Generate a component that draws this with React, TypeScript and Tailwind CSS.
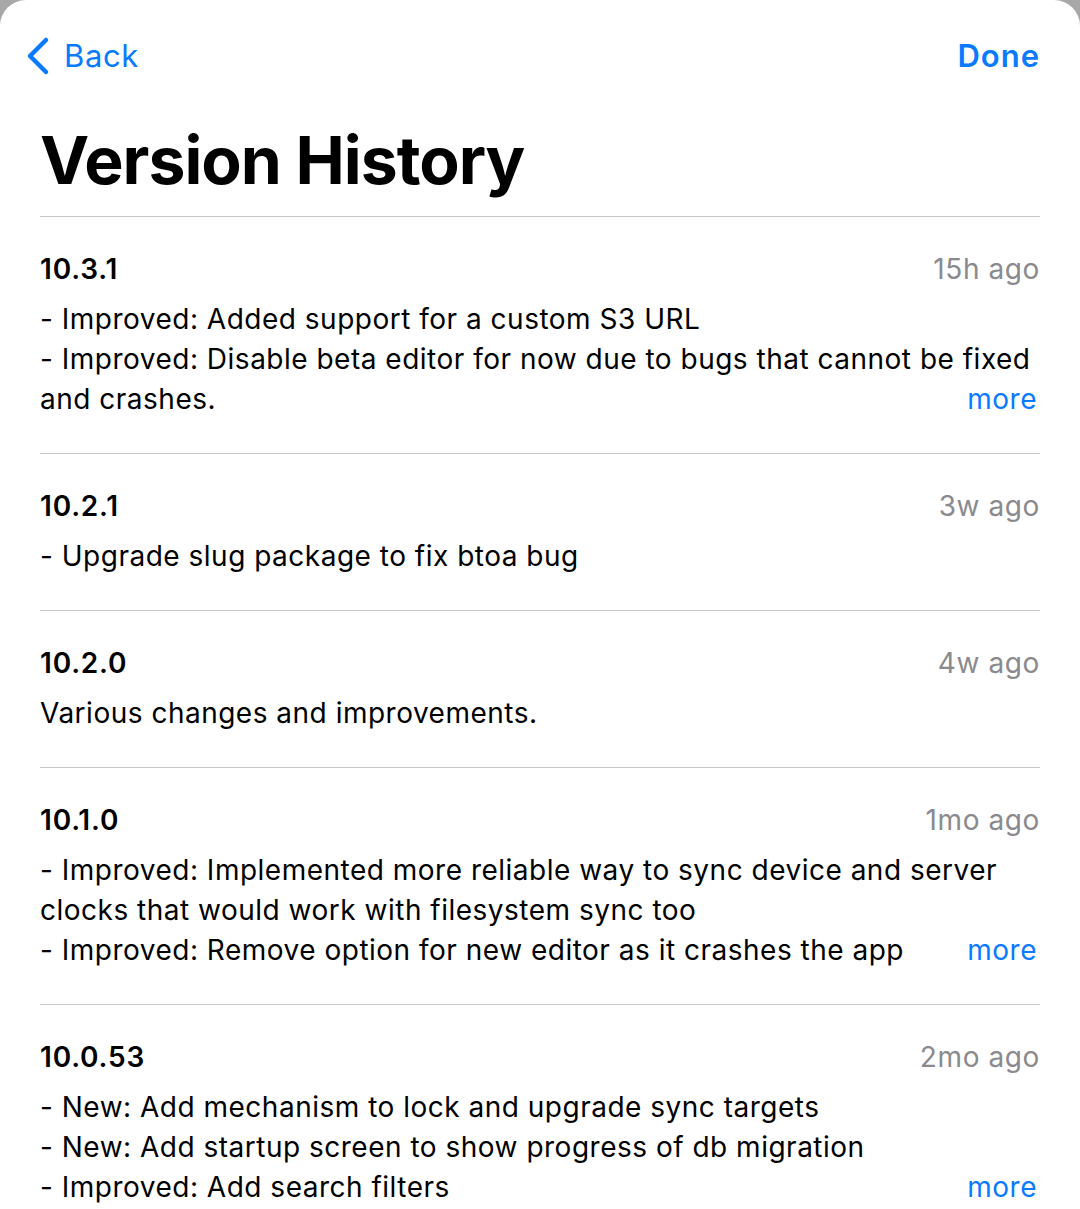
import React from "react";

interface Version {
  id: string;
  when: string;
  lines: string[];
  more?: boolean;
}

const versions: Version[] = [
  {
    id: "10.3.1",
    when: "15h ago",
    lines: [
      "- Improved: Added support for a custom S3 URL",
      "- Improved: Disable beta editor for now due to bugs that cannot be fixed",
      "and crashes.",
    ],
    more: true,
  },
  { id: "10.2.1", when: "3w ago", lines: ["- Upgrade slug package to fix btoa bug"] },
  { id: "10.2.0", when: "4w ago", lines: ["Various changes and improvements."] },
  {
    id: "10.1.0",
    when: "1mo ago",
    lines: [
      "- Improved: Implemented more reliable way to sync device and server",
      "clocks that would work with filesystem sync too",
      "- Improved: Remove option for new editor as it crashes the app",
    ],
    more: true,
  },
  {
    id: "10.0.53",
    when: "2mo ago",
    lines: [
      "- New: Add mechanism to lock and upgrade sync targets",
      "- New: Add startup screen to show progress of db migration",
      "- Improved: Add search filters",
    ],
    more: true,
  },
];

function VersionRow({ v }: { v: Version }) {
  return (
    <div className="border-t border-[#c8c8cc] pt-8 pb-[34px]">
      <div className="flex items-center justify-between h-10">
        <span className="text-[28px] font-semibold text-black tracking-[0.8px]">{v.id}</span>
        <span className="text-[28px] text-[#8a8a8e] tracking-[0.6px]">{v.when}</span>
      </div>
      <div className="mt-[10px]">
        {v.lines.map((l, i) => {
          const last = i === v.lines.length - 1;
          return (
            <div key={i} className="flex items-center justify-between h-10 text-[28px] text-black whitespace-nowrap tracking-[0.5px]">
              <span>{l}</span>
              {last && v.more && <span className="text-[#0a7aff] pr-[3px]">more</span>}
            </div>
          );
        })}
      </div>
    </div>
  );
}

export default function App() {
  return (
    <div className="bg-[#a8a8a8] w-[1080px] h-[1209px] overflow-hidden" style={{ fontFamily: "Inter, 'Noto Sans', sans-serif" }}>
      <div className="bg-white rounded-t-[26px] h-full px-10">
        <div className="flex items-center justify-between pt-[36px] h-[76px]">
          <button className="flex items-center gap-[14px] -ml-[14px] text-[#0a7aff]">
            <svg width="24" height="40" viewBox="0 0 24 40" fill="none">
              <path d="M20 4 L4 20 L20 36" stroke="#0a7aff" strokeWidth="4.5" strokeLinecap="round" strokeLinejoin="round" />
            </svg>
            <span className="text-[31px] tracking-[0.6px]">Back</span>
          </button>
          <button className="text-[31px] font-semibold text-[#0a7aff] tracking-[1px]">Done</button>
        </div>
        <h1 className="mt-[44px] text-[66px] font-bold text-black leading-[80px] tracking-[-1px]">Version History</h1>
        <div className="mt-[16px]">
          {versions.map((v) => (
            <VersionRow key={v.id} v={v} />
          ))}
        </div>
      </div>
    </div>
  );
}
